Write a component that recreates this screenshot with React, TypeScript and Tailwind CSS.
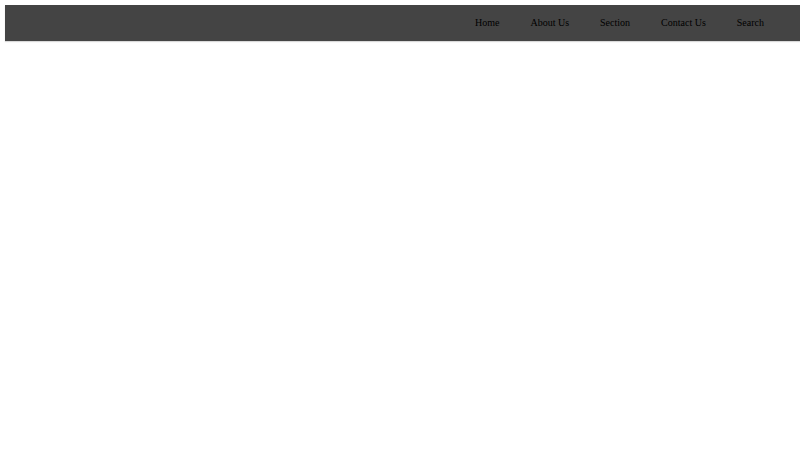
import React from "react";

export default function App() {
  const items = ["Home", "About Us", "Section", "Contact Us", "Search"];
  return (
    <div className="min-h-[450px] w-[800px] overflow-hidden bg-white pl-[5px] pt-[5px]">
      <nav className="flex h-[36px] w-[800px] items-center justify-end bg-[#444444] pr-[41px] shadow-[0_1px_1px_rgba(0,0,0,0.15)]">
        <ul className="flex items-center gap-[31px]" style={{ fontFamily: '"Liberation Serif", "Times New Roman", serif' }}>
          {items.map((t) => (
            <li key={t} className="text-[10px] leading-none text-black">
              {t}
            </li>
          ))}
        </ul>
      </nav>
    </div>
  );
}
